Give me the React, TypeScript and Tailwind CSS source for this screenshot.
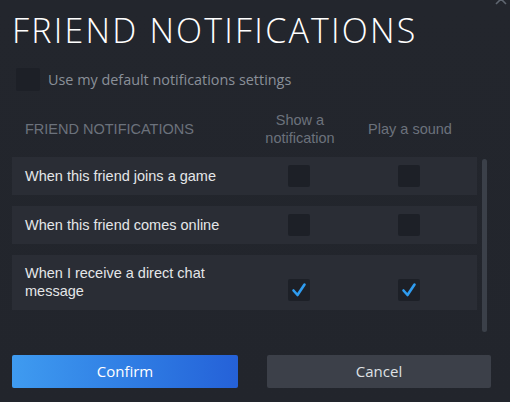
import { useState } from "react";

type Pref = { label: string; notify: boolean; sound: boolean };

const initialPrefs: Pref[] = [
  { label: "When this friend joins a game", notify: false, sound: false },
  { label: "When this friend comes online", notify: false, sound: false },
  { label: "When I receive a direct chat message", notify: true, sound: true },
];

function Check({ checked, onClick, className = "" }: { checked: boolean; onClick?: () => void; className?: string }) {
  return (
    <button
      onClick={onClick}
      className={`flex h-[22px] w-[22px] items-center justify-center rounded-[2px] bg-[#1d2027] ${className}`}
    >
      {checked && (
        <svg width="18" height="18" viewBox="0 0 18 18" fill="none">
          <path d="M3.5 9.5 L7.5 14 L14.5 3.5" stroke="#2f9cf0" strokeWidth="2.6" strokeLinecap="round" strokeLinejoin="round" />
        </svg>
      )}
    </button>
  );
}

export default function App() {
  const [useDefault, setUseDefault] = useState(false);
  const [prefs, setPrefs] = useState(initialPrefs);

  const toggle = (i: number, key: "notify" | "sound") =>
    setPrefs((p) => p.map((r, j) => (j === i ? { ...r, [key]: !r[key] } : r)));

  return (
    <div className="relative h-[402px] w-[510px] overflow-hidden bg-gradient-to-b from-[#23262d] to-[#22252c] font-['Liberation_Sans',Arial,sans-serif]">
      {/* close button, sits partly above the window edge */}
      <button className="absolute right-[2px] top-[-8px] text-[#6b7280]">
        <svg width="14" height="14" viewBox="0 0 14 14" fill="none">
          <path d="M2 2 L12 12 M12 2 L2 12" stroke="#5f6670" strokeWidth="1.6" />
        </svg>
      </button>

      <h1 className="pl-[12px] pt-[7px] font-['Open_Sans',sans-serif] text-[34px] font-light leading-[46px] tracking-[2.2px] text-white">
        FRIEND NOTIFICATIONS
      </h1>

      <label className="mt-[15px] flex items-center gap-[8px] pl-[16px]">
        <Check checked={useDefault} onClick={() => setUseDefault(!useDefault)} className="h-[23px] w-[24px]" />
        <span className="font-['Open_Sans',sans-serif] text-[14.4px] text-[#8a9099]">
          Use my default notifications settings
        </span>
      </label>

      <div className="mt-[20px] grid grid-cols-[1fr_110px_110px] items-center pl-[25px] pr-[45px] text-[14.5px] leading-[18px] text-[#6c727c]">
        <span>FRIEND NOTIFICATIONS</span>
        <span className="text-center">
          Show a<br />notification
        </span>
        <span className="text-center">Play a sound</span>
      </div>

      <div className="mt-[10px] flex pl-[12px] pr-[23px]">
        <div className="flex flex-1 flex-col gap-[11px]">
          {prefs.map((r, i) => (
            <div
              key={r.label}
              className={`grid grid-cols-[1fr_110px_110px] items-center bg-[#2a2d35] pl-[13px] pr-[13px] text-[14.5px] leading-[18px] text-[#e4e6e8] ${
                i === 2 ? "h-[55px]" : "h-[38px]"
              }`}
            >
              <span className={i === 2 ? "max-w-[200px] -mt-[2px]" : ""}>{r.label}</span>
              <Check checked={r.notify} onClick={() => toggle(i, "notify")} className={`justify-self-center ${i === 2 ? "mt-[15px]" : ""}`} />
              <Check checked={r.sound} onClick={() => toggle(i, "sound")} className={`justify-self-center ${i === 2 ? "mt-[15px]" : ""}`} />
            </div>
          ))}
          <div className="h-[11px]" />
        </div>
        <div className="ml-[5px] mt-[2px] w-[5px] rounded-full bg-[#3b4049]" />
      </div>

      <div className="mt-[23px] grid grid-cols-[226px_224px] gap-[29px] pl-[12px] font-['Open_Sans',sans-serif] text-[15px]">
        <button className="h-[33px] rounded-[2px] bg-gradient-to-r from-[#3f9bf0] to-[#2561d8] text-white">
          Confirm
        </button>
        <button className="h-[33px] rounded-[2px] bg-[#3c4049] text-[#dfe1e4]">Cancel</button>
      </div>
    </div>
  );
}
